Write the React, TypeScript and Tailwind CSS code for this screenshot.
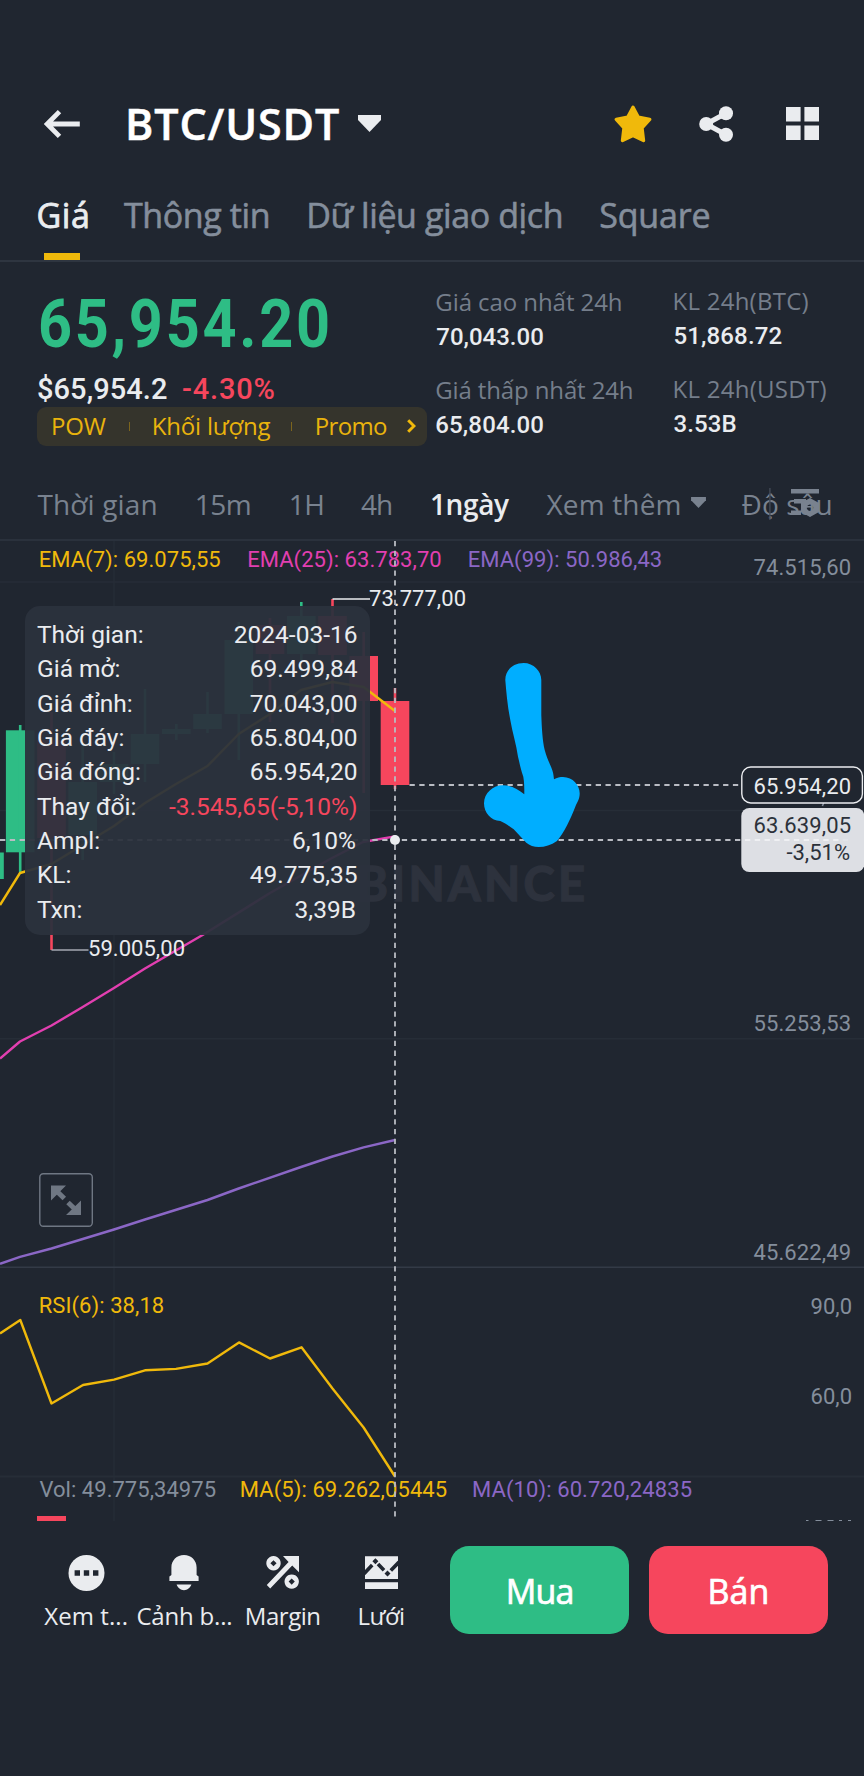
import React from "react";

const SANS = "font-['Open_Sans','Noto_Sans',sans-serif]";
const NUM = "font-['Roboto',sans-serif]";

const tabs = [
  { label: "Giá", cls: "w-[87.5px] text-[#eaecef] tracking-[0.6px] [-webkit-text-stroke:0.8px]", active: true },
  { label: "Thông tin", cls: "w-[182.2px] text-[#848e9c] tracking-[-0.4px] [-webkit-text-stroke:0.6px]" },
  { label: "Dữ liệu giao dịch", cls: "w-[293px] text-[#848e9c] tracking-[-0.4px] [-webkit-text-stroke:0.6px]" },
  { label: "Square", cls: "text-[#848e9c] tracking-[-0.16px] [-webkit-text-stroke:0.6px]" },
];

const statColumns = [
  {
    cls: "w-[237.2px] pt-[21.5px]",
    items: [
      { label: "Giá cao nhất 24h", value: "70,043.00", lc: "tracking-[-0.07px]", vc: "pl-px" },
      { label: "Giá thấp nhất 24h", value: "65,804.00", lc: "tracking-[-0.13px]", vc: "tracking-[0.14px]" },
    ],
  },
  {
    cls: "pt-[20.5px]",
    items: [
      { label: "KL 24h(BTC)", value: "51,868.72", lc: "tracking-[0.25px]", vc: "pl-px tracking-[0.14px]" },
      { label: "KL 24h(USDT)", value: "3.53B", lc: "tracking-[0.27px]", vc: "pl-px tracking-[0.1px]" },
    ],
  },
];

const intervals = [
  { label: "Thời gian", cls: "w-[157.2px] tracking-[0.14px]" },
  { label: "15m", cls: "w-[94px] tracking-[-0.5px]" },
  { label: "1H", cls: "w-[72.3px] tracking-[-0.4px]" },
  { label: "4h", cls: "w-[69px] tracking-[-1px]" },
  { label: "1ngày", cls: "w-[116.5px] font-semibold text-[#eaecef] tracking-[-0.39px]" },
];

const ohlc = [
  ["Thời gian:", "2024-03-16"],
  ["Giá mở:", "69.499,84"],
  ["Giá đỉnh:", "70.043,00"],
  ["Giá đáy:", "65.804,00"],
  ["Giá đóng:", "65.954,20"],
  ["Thay đổi:", "-3.545,65(-5,10%)"],
  ["Ampl:", "6,10%"],
  ["KL:", "49.775,35"],
  ["Txn:", "3,39B"],
];

// centre x, body top, body bottom, wick top, wick bottom, rising
const candles: [number, number, number, number, number, boolean][] = [
  [-10.5, 852.5, 879, 852.5, 879, true],
  [20.2, 730.3, 852.3, 725, 872, true],
  [51.5, 740, 838, 712, 950, false],
  [82.7, 782, 835, 745, 860, true],
  [114, 764, 782, 752, 794, true],
  [145, 734, 764, 689, 782, true],
  [176.3, 729, 734, 724, 740, true],
  [207.5, 714, 729, 692, 733, true],
  [238.8, 640, 714, 622, 760, true],
  [270, 625, 654, 618, 722, false],
  [301.3, 616, 654, 602, 660, true],
  [332.5, 616, 655, 599, 723, false],
  [363.7, 656, 701, 632, 793, false],
  [395, 701, 785, 688, 789, false],
];

function BackIcon() {
  return (
    <svg className="w-[36px] h-[30px]" viewBox="0 0 36 30" fill="none" stroke="#eaecef" strokeWidth="4.8">
      <path d="M35.8 15H4M15.5 2.6L3.2 15L15.5 27.4" />
    </svg>
  );
}

function Caret({ className, fill }: { className: string; fill: string }) {
  return (
    <svg className={className} viewBox="0 0 23 17" fill={fill}>
      <path d="M0 0H23V5L11.5 17L0 5Z" />
    </svg>
  );
}

function StarIcon() {
  return (
    <svg className="w-[38px] h-[38px]" viewBox="0 0 38 38" fill="#f0b90b" stroke="#f0b90b" strokeWidth="3.4" strokeLinejoin="round">
      <path d="M19 2.2L24.3 12.2L35.7 14.4L28 22.9L29.5 35.6L19 30.4L8.5 35.6L10 22.9L2.3 14.4L13.7 12.2Z" />
    </svg>
  );
}

function ShareIcon() {
  return (
    <svg className="w-[34px] h-[36px]" viewBox="0 0 34 36" fill="#eaecef" stroke="#eaecef">
      <path d="M27 7.2L7.2 18L27 28.8" fill="none" strokeWidth="5" />
      <g stroke="none">
        <circle cx="27" cy="7.2" r="7" />
        <circle cx="7.2" cy="18" r="7" />
        <circle cx="27" cy="28.8" r="7" />
      </g>
    </svg>
  );
}

function GridIcon() {
  return (
    <svg className="w-[33px] h-[33px]" viewBox="0 0 33 33" fill="#eaecef">
      <path d="M0 0h14.6v14.6H0zM18.4 0H33v14.6H18.4zM0 18.4h14.6V33H0zM18.4 18.4H33V33H18.4z" />
    </svg>
  );
}

function MoreIcon() {
  return (
    <svg className="w-[37px] h-[36px]" viewBox="0 0 37 36">
      <circle cx="18.5" cy="18" r="18" fill="#eaecef" />
      <path d="M6.6 15.3h5.4v5.4H6.6zM15.8 15.3h5.4v5.4h-5.4zM25 15.3h5.4v5.4H25z" fill="#202630" />
    </svg>
  );
}

function BellIcon() {
  return (
    <svg className="w-[30px] h-[36px]" viewBox="0 0 30 36" fill="#eaecef">
      <path d="M15 0C22.2 0 27.6 5.4 27.6 12.4V20L29.6 21.5V26H0.4V21.5L2.4 20V12.4C2.4 5.4 7.8 0 15 0ZM7.6 29.5H22.4C21.2 32.9 18.4 35.2 15 35.2C11.6 35.2 8.8 32.9 7.6 29.5Z" />
    </svg>
  );
}

function MarginIcon() {
  return (
    <svg className="w-[33px] h-[36px]" viewBox="0 0 33 36" fill="#eaecef">
      <path fillRule="evenodd" d="M7.5 1a7.2 7.2 0 1 0 .01 0zM7.5 5.2L10.6 8.2L7.5 11.3L4.4 8.2ZM25.7 19.4a7.2 7.2 0 1 0 .01 0zM25.7 23.5L28.8 26.6L25.7 29.7L22.6 26.6Z" />
      <path d="M17 1H33V17.2L26.2 10.4L4.2 33.4L.8 30L22.6 7Z" />
    </svg>
  );
}

function BotIcon() {
  return (
    <svg className="w-[33px] h-[36px]" viewBox="0 0 33 36">
      <path d="M0 1.3H33V24H0zM0 27.3H33V34H0z" fill="#eaecef" />
      <g stroke="#202630" strokeWidth="3.6" fill="none">
        <path d="M-1 18.8L7.2 10M13 9L19 15.2M25.8 15.6L34 7" />
      </g>
      <path d="M10.4 3.3L13.4 6.3L10.4 9.3L7.4 6.3ZM22.5 15.5L25.5 18.5L22.5 21.5L19.5 18.5Z" fill="#202630" />
    </svg>
  );
}

const navItems = [
  { label: "Xem t...", icon: <MoreIcon />, cls: "tracking-[0.08px]" },
  { label: "Cảnh b...", icon: <BellIcon />, cls: "tracking-[-0.18px]" },
  { label: "Margin", icon: <MarginIcon />, cls: "tracking-[-0.46px]" },
  { label: "Lưới", icon: <BotIcon />, cls: "tracking-[-0.5px]" },
];

function ChartPlot() {
  const axis = { fill: "#848e9c", fontSize: 22, textAnchor: "end" as const };
  const legend = { fontSize: 22 };
  return (
    <svg className="block w-[864px] h-[980px] font-['Roboto',sans-serif]" viewBox="0 541 864 980">
      <g stroke="#262d37" strokeWidth="1.4">
        <path d="M0 582H864M0 810.5H864M0 1038.7H864M114 541V1521" />
        <path d="M0 1476.6H864" strokeWidth="2" />
        <path d="M0 1267.2H864" stroke="#333a46" />
      </g>
      <text x="357" y="901" fontSize="47" fontWeight="700" fill="#2d323d" textLength="228" className="font-['Lato',sans-serif]" stroke="#2d323d" strokeWidth="1.4">BINANCE</text>

      {candles.map(([x, top, bottom, high, low, up]) => (
        <g key={x} fill={up ? "#2ebd85" : "#f6465d"}>
          <rect x={x - 14.3} y={top} width="28.6" height={bottom - top} />
          <rect x={x - 1.3} y={high} width="2.6" height={low - high} />
        </g>
      ))}
      <rect x="37" y="1516" width="29" height="5" fill="#f6465d" />

      <g fill="none" strokeWidth="2.4" strokeLinejoin="round">
        <path stroke="#f0b90b" d="M0 905L20 873L51.5 864L82.7 845L114 826L145 803L176 784L207.5 766L238.7 734L270 714L301 690L332.5 682L363.6 687L395 711" />
        <path stroke="#e23fb0" d="M0 1058.5L20 1041.5L51.5 1025.5L82.7 1007L114 988L145 968.5L203 934.8L270 893L332 858L363 842L395 836.4" />
        <path stroke="#8b67c6" d="M0 1263.8L20 1256.8L51.5 1248.5L114 1229.5L145 1219.5L207.5 1200L238.7 1188.5L301 1167L332.5 1156.5L363.6 1147.3L395 1140" />
        <path stroke="#f0b90b" d="M0 1333.5L20.3 1320L51.5 1403.5L83 1385L114 1379.6L145 1370.3L176 1368.9L207.5 1363.5L239 1342.4L270 1358.5L301.5 1347.3L332.5 1388.5L363.6 1427.5L395 1476.5" />
      </g>

      <g fill="none" strokeWidth="1.6">
        <path stroke="#eaecef" d="M332.5 599H370" />
        <path stroke="#a4a9b2" d="M51.5 950H88.5" />
      </g>
      <g fill="#eaecef" fontSize="22">
        <text x="369" y="605.7" textLength="97">73.777,00</text>
        <text x="88" y="955.5" textLength="97">59.005,00</text>
      </g>

      <text {...legend} x="38.7" y="566.5" fill="#f0b90b" textLength="182">EMA(7): 69.075,55</text>
      <text {...legend} x="247.2" y="566.5" fill="#e23fb0" textLength="194.5">EMA(25): 63.783,70</text>
      <text {...legend} x="467.7" y="566.5" fill="#8b67c6" textLength="194.5">EMA(99): 50.986,43</text>
      <text {...legend} x="38.7" y="1312.5" fill="#f0b90b" textLength="125.5">RSI(6): 38,18</text>
      <text {...legend} x="39.5" y="1497" fill="#848e9c" textLength="176.5">Vol: 49.775,34975</text>
      <text {...legend} x="239.7" y="1497" fill="#f0b90b" textLength="207.5">MA(5): 69.262,05445</text>
      <text {...legend} x="472" y="1497" fill="#8b67c6" textLength="220">MA(10): 60.720,24835</text>

      <text {...axis} x="851" y="574.500" textLength="97.5">74.515,60</text>
      <text {...axis} x="851" y="1031.3" textLength="97.5">55.253,53</text>
      <text {...axis} x="851" y="1260" textLength="97.5">45.622,49</text>
      <text {...axis} x="852" y="1313.5">90,0</text>
      <text {...axis} x="852" y="1404">60,0</text>
      <path d="M806 1520.5h2.5M815.5 1520.5h6M827.5 1520.5h6M839 1520.5h3M848 1520.5h3" stroke="#848e9c" strokeWidth="1" />
      <path d="M823.6 803L822.4 806" stroke="#848e9c" strokeWidth="1.6" />

      <g stroke="#b9bcc3" strokeWidth="1.8" fill="none" strokeDasharray="5.3 4.5">
        <path d="M395 541V1518" />
        <path d="M409.5 785H741" />
        <path d="M0 840H848" strokeWidth="2" />
      </g>
      <circle cx="395" cy="840" r="5" fill="#eaecef" />

      <rect x="741.8" y="767" width="120.6" height="36" rx="9" fill="#202630" stroke="#eaecef" strokeWidth="1.4" />
      <rect x="741.3" y="808" width="123" height="64" rx="8" fill="#e3e5ea" fillOpacity="0.97" />
      <path d="M745 840H840" stroke="#f3f4f6" strokeWidth="1.6" strokeDasharray="5.3 4.5" />
      <text {...axis} fill="#eaecef" x="851" y="793.7" textLength="97.5">65.954,20</text>
      <text {...axis} fill="#2b313a" x="851" y="832.7" textLength="97.5">63.639,05</text>
      <text {...axis} fill="#2b313a" x="850" y="860">-3,51%</text>

      <g stroke="#6f7783" fill="none">
        <rect x="39.8" y="1173.8" width="52.5" height="52.5" rx="3.5" strokeWidth="1.4" />
        <path d="M54 1188.500L64.3 1198.5M68 1202.5L78 1212" strokeWidth="5" />
      </g>
      <path d="M51 1185.6H66L51 1200.4ZM81 1215V1200.4L66 1215Z" fill="#6f7783" />

      <path
        fill="#00aeff"
        d="M505.3 680C505.3 670 513 663 523.7 663C533.5 663 541.3 671 541.3 680V715C541.8 728 542.5 741 544.7 750C546.5 757 549 762 551 766.7C553 771.5 553.5 774 554 779.3C557 777.5 560 777 563 777C573 777 579.7 785.5 579.7 793.3C579.7 799 577.5 801.5 575.3 806.7C570 820 564.5 832 557 841C551 845 545 847 538.7 847C534 847 529.5 845.5 526.3 842.7L513.7 829.3C509 826 505 823 500.3 821C491 821 484 812.5 484 803.3C484 793 493 785.3 503 785.3C511 785.3 518 789.5 524.3 794.3C524.3 788 524.3 782.5 523.3 776.7C520.5 768.5 519.8 764 518 756.7C516.5 745 512.3 732 510.3 720C507.5 706 506.3 692 505.3 680Z"
      />
    </svg>
  );
}

export default function App() {
  return (
    <div className={`w-[864px] h-[1776px] overflow-hidden bg-[#202630] flex flex-col whitespace-nowrap ${SANS}`}>
      <header className="mt-[74px] h-[99px] shrink-0 flex items-center pl-[44px]">
        <BackIcon />
        <h1 className="ml-[45px] w-[233px] text-[43px] leading-[60px] font-semibold tracking-[0.89px] text-white [-webkit-text-stroke:0.5px]">BTC/USDT</h1>
        <Caret className="w-[23px] h-[17px]" fill="#eaecef" />
        <div className="flex items-center ml-[233px]">
          <StarIcon />
          <div className="ml-[47px]"><ShareIcon /></div>
          <div className="ml-[53px]"><GridIcon /></div>
        </div>
      </header>

      <nav className="h-[89px] shrink-0 border-b-2 border-[#2e3540] flex pl-[36.5px] pt-[18px] text-[34px] leading-[48px]">
        {tabs.map((t) => (
          <div key={t.label} className={`flex flex-col justify-between ${t.cls}`}>
            <span>{t.label}</span>
            {t.active && <span className="ml-[7.5px] w-[36px] h-[7.5px] bg-[#f0b90b]" />}
          </div>
        ))}
      </nav>

      <section className="h-[200px] shrink-0 flex pl-[37px]">
        <div className={`w-[398.3px] pt-[27.7px] ${NUM}`}>
          <div className="w-[340px] pl-px origin-left scale-x-[0.88] text-[67.5px] leading-[68px] font-bold tracking-[3.1px] text-[#2ebd85]">65,954.20</div>
          <div className="mt-[14px] flex text-[29px] leading-[34px] font-medium">
            <span className="w-[145px] tracking-[0.07px] text-[#eaecef]">$65,954.2</span>
            <span className="tracking-[0.83px] text-[#f6465d]">-4.30%</span>
          </div>
          <div className={`mt-[1px] w-[390px] h-[39px] rounded-[9px] bg-[#35342c] flex items-center pl-[14px] text-[24px] leading-[37px] text-[#e9b30d] ${SANS}`}>
            <span className="w-[77.5px] -mt-px tracking-[-0.2px]">POW</span>
            <span className="w-px h-[9px] bg-[#7c651d]" />
            <span className="ml-[22.3px] w-[139.5px] -mt-px tracking-[-0.2px]">Khối lượng</span>
            <span className="w-px h-[9px] bg-[#7c651d]" />
            <span className="ml-[22.5px] w-[92.2px] -mt-px tracking-[-0.65px]">Promo</span>
            <svg className="w-[9px] h-[14px]" viewBox="0 0 9 14" fill="none" stroke="#f0b90b" strokeWidth="3">
              <path d="M1.2 1.2L7 7L1.2 12.8" />
            </svg>
          </div>
        </div>
        {statColumns.map((c, i) => (
          <div key={i} className={`flex flex-col gap-[18.5px] text-[24px] leading-[35px] ${c.cls}`}>
            {c.items.map((s) => (
              <div key={s.label}>
                <div className={`text-[#757e8b] ${s.lc}`}>{s.label}</div>
                <div className={`relative top-px font-medium text-[#eaecef] ${NUM} ${s.vc}`}>{s.value}</div>
              </div>
            ))}
          </div>
        ))}
      </section>

      <div className="relative h-[79px] shrink-0 border-b-2 border-[#2a313c] flex pl-[37.5px] pt-[22px] text-[28px] leading-[40px] text-[#79828f]">
        {intervals.map((t) => (
          <span key={t.label} className={t.cls}>{t.label}</span>
        ))}
        <span className="w-[195px] flex">
          <span className="tracking-[0.15px]">Xem thêm</span>
          <Caret className="w-[15px] h-[11px] mt-[13px] ml-[9px]" fill="#79828f" />
        </span>
        <span className="tracking-[0.13px]">Độ sâu</span>
        <svg className="absolute left-[768px] top-[26px] w-[54px] h-[34px]" viewBox="768 488 54 34" fill="#79828f">
          <rect x="769.2" y="488" width="1.4" height="32" fill="#434a56" />
          <path d="M791 489h28v4.5h-28zM794 499h12v4.5h-12zM791 510.5h10v4.5h-10z" />
          <path fillRule="evenodd" d="M810 498L819 503V512L810 517L801 512V503ZM810 504.5a3.2 3.2 0 1 0 .01 0z" />
        </svg>
      </div>

      <main className="relative h-[980px] shrink-0">
        <ChartPlot />
        <div className={`absolute left-[24.5px] top-[65px] w-[345.5px] h-[329px] rounded-[15px] bg-[#2b313d]/95 px-[12.5px] pt-[12px] flex flex-col text-[24.5px] leading-[34.33px] text-[#eaecef] ${NUM}`}>
          {ohlc.map(([k, v]) => (
            <div key={k} className="flex justify-between">
              <span>{k}</span>
              <span className={v.includes("(") ? "text-[#f6465d]" : v.endsWith("%") || v.endsWith("B") ? "pr-[1.5px]" : ""}>{v}</span>
            </div>
          ))}
        </div>
      </main>

      <footer className="flex-1 flex pl-[37px]">
        {navItems.map((n) => (
          <div key={n.label} className="w-[98.3px] pt-[34px] flex flex-col items-center">
            {n.icon}
            <span className={`mt-[8.5px] text-[24px] leading-[32px] text-[#eaecef] ${n.cls}`}>{n.label}</span>
          </div>
        ))}
        <div className="ml-[20.1px] pt-[24.5px] flex gap-[20.3px] text-[34px] text-white [-webkit-text-stroke:0.7px]">
          <button className="w-[178.7px] h-[88.5px] rounded-[19px] bg-[#2ebd85] pt-[4px] tracking-[-0.9px]">Mua</button>
          <button className="w-[178.3px] h-[88.5px] rounded-[19px] bg-[#f6465d] pt-[4px] tracking-[0.07px]">Bán</button>
        </div>
      </footer>
    </div>
  );
}
